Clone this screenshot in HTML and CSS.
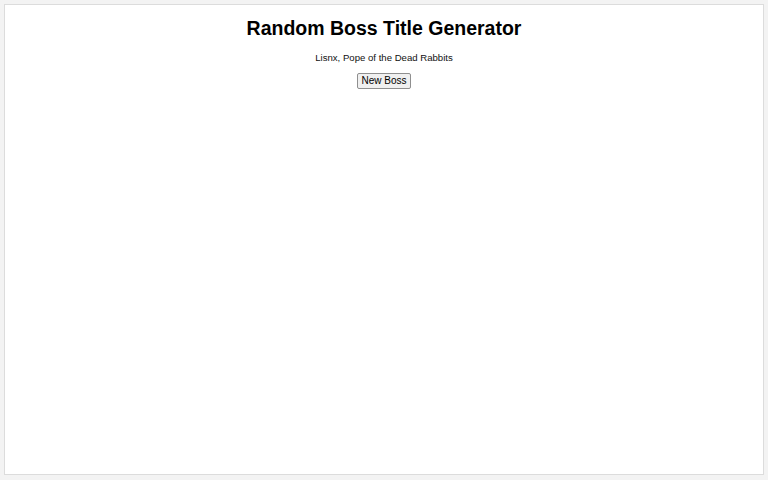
FILE: index.html
```html
<!DOCTYPE html>
<html lang="en">

<head>
  <meta charset="UTF-8" />
  <meta name="viewport" content="width=device-width, initial-scale=1.0" />
  <title>Random Boss Title Generator</title>
  <link rel="stylesheet" href="styles.css">
</head>

<body>
  <div class="card">
    <h1>Random Boss Title Generator</h1>

    <p class="boss" id="bossName">Lisnx, Pope of the Dead Rabbits</p>

    <button id="newBtn">New Boss</button>
  </div>

  <script>
    const names = ["Lisnx", "Mordak", "Velgrim", "Ossra", "Thule", "Karvex"];
    const titles = ["Pope of the Dead Rabbits", "Warden of Ash", "Duke of the Hollow Moon", "Eater of Bells", "Queen of Rust"];

    const bossEl = document.getElementById("bossName");
    const newBtn = document.getElementById("newBtn");

    const pick = (list) => list[Math.floor(Math.random() * list.length)];

    newBtn.onclick = () => {
      bossEl.textContent = pick(names) + ", " + pick(titles);
    };
  </script>
</body>

</html>
```

FILE: styles.css
```css
html,
body {
  height: 100%;
}

body {
  font-family: 'Liberation Sans', Arial, sans-serif;
  background: #f3f3f3;
  margin: 0;
  padding: 4px 4px 5px;
  box-sizing: border-box;
}

.card {
  height: 100%;
  box-sizing: border-box;
  background: #fff;
  border: 1px solid #dcdcdc;
  text-align: center;
  padding-top: 12px;
}

h1 {
  font-size: 19.5px;
  margin: 0;
  color: #000;
}

.boss {
  font-size: 9.6px;
  margin: 12px 0 7px;
  color: #111;
}

button {
  font-family: 'Liberation Sans', Arial, sans-serif;
  font-size: 10px;
  padding: 1px 3px 2px;
  background: #f0f0f0;
  border: 1px solid #8f8f8f;
  border-radius: 2px;
  color: #000;
}
```
